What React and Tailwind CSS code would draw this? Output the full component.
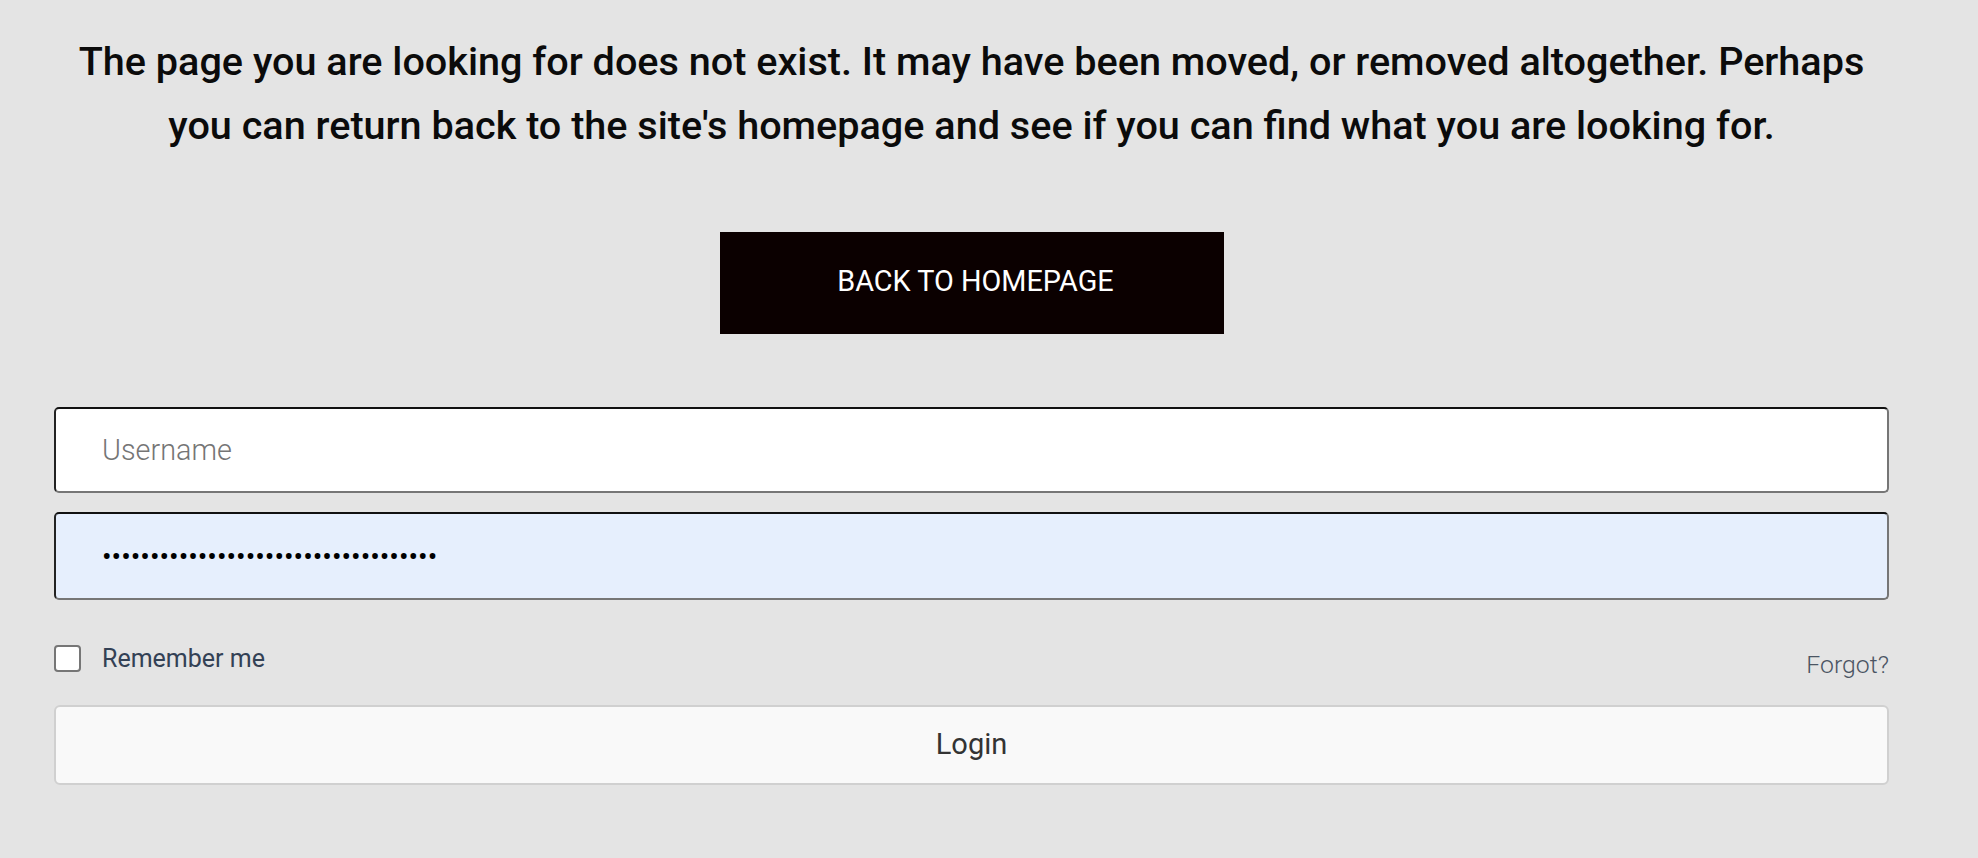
import React from 'react';

export default function App() {
  return (
    <div className="min-h-screen bg-[#e4e4e4] pl-[54px] pt-[30px] font-['Roboto',sans-serif]">
      <div className="w-[1835px]">
        <p className="text-center text-[39.6px] leading-[64px] font-medium text-[#0b0b0b]">
          The page you are looking for does not exist. It may have been moved, or removed altogether. Perhaps you can return back to the site's homepage and see if you can find what you are looking for.
        </p>

        <div className="mt-[74px] flex justify-center">
          <a href="#" className="flex h-[102px] w-[504px] items-center justify-center pb-[3px] pl-[8px] bg-[#0b0000] text-[28.8px] text-white">
            BACK TO HOMEPAGE
          </a>
        </div>

        <form className="mt-[73px]" onSubmit={(e) => e.preventDefault()}>
          <input
            type="text"
            placeholder="Username"
            className="block h-[86px] w-full rounded-[5px] border-2 border-[#767676] border-t-[#111] border-l-[#222] bg-white px-[46px] text-[28.8px] font-light text-[#111] outline-none placeholder:text-[#757575]"
          />
          <input
            type="password"
            readOnly
            defaultValue="abcdefghijklmnopqrstuvwxyz123456789"
            className="mt-[19px] block h-[88px] w-full rounded-[5px] border-2 border-[#767676] border-t-[#111] border-l-[#222] bg-[#e6effd] px-[46px] text-[28.4px] text-black outline-none"
          />

          {/* remember + forgot row */}
          <div className="mt-[45px] flex items-start justify-between">
            <label className="flex h-[27px] items-center gap-[21px]">
              <input
                type="checkbox"
                className="h-[27px] w-[27px] appearance-none rounded-[4px] border-2 border-[#767676] bg-white"
              />
              <span className="text-[25px] leading-[27px] text-[#334155]">Remember me</span>
            </label>
            <a href="#" className="mt-[6px] text-[24.8px] font-light leading-[27px] text-[#4b5563]">
              Forgot?
            </a>
          </div>

          <button
            type="submit"
            className="mt-[27px] block h-[80px] w-full rounded-[6px] border-2 border-[#d0d0d0] bg-[#f9f9f9] text-[29px] text-[#333]"
          >
            Login
          </button>
        </form>
      </div>
    </div>
  );
}
